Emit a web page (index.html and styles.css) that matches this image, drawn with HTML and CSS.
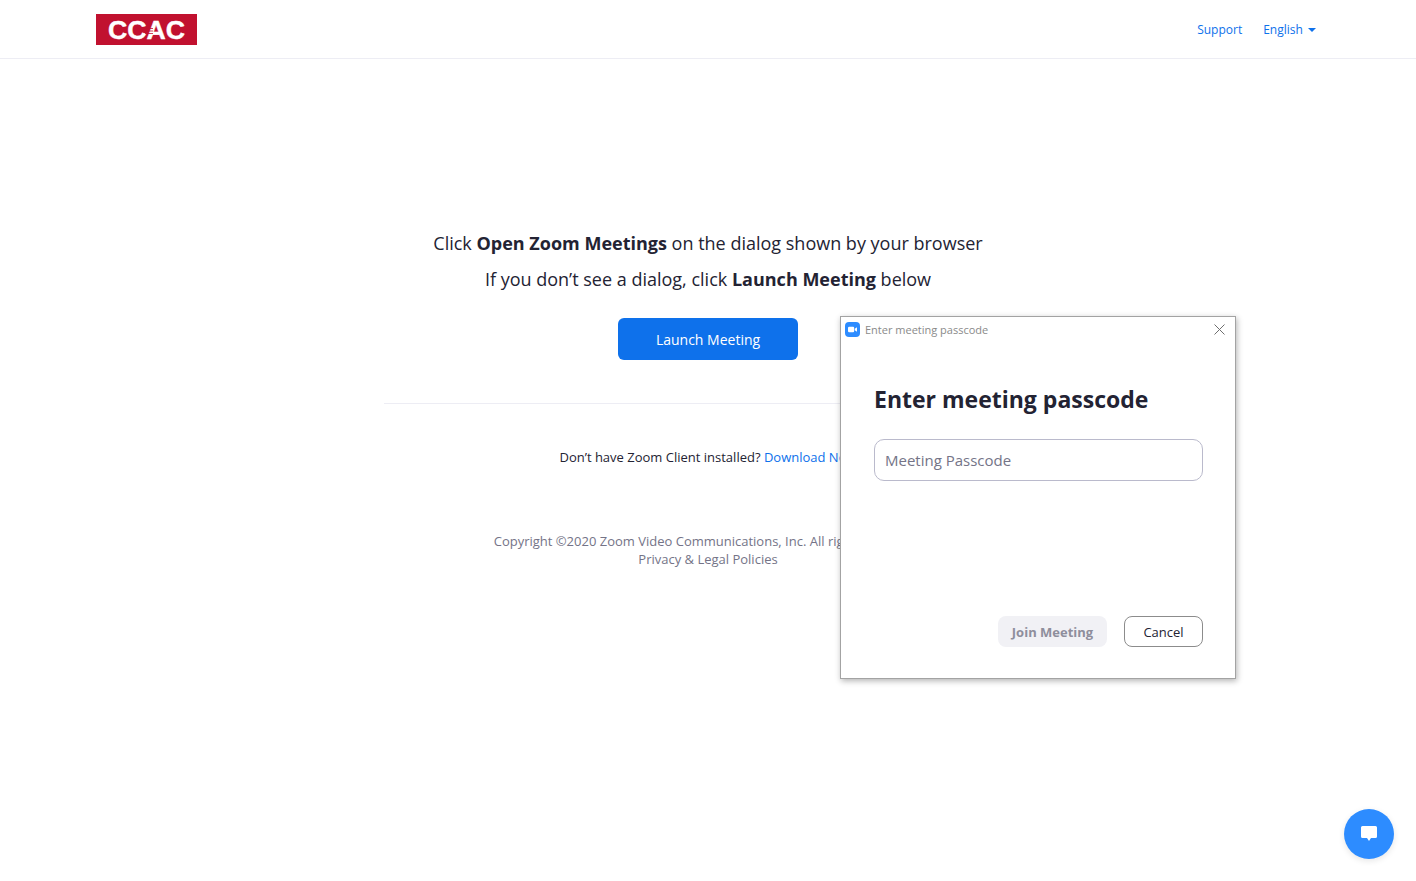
FILE: index.html
```html
<!DOCTYPE html>
<html lang="en">
<head>
    <meta charset="UTF-8">
    <meta name="viewport" content="width=device-width, initial-scale=1.0">
    <title>Launch Meeting</title>
    <link rel="stylesheet" href="styles.css">
</head>
<body>
    <header class="topbar">
        <a class="logo" href="#">
            <svg width="101" height="31" viewBox="0 0 101 31">
                <rect width="101" height="31" fill="#c1112f"/>
                <text x="12" y="24.5" class="logo-text" textLength="77" lengthAdjust="spacingAndGlyphs">CCAC</text>
                <path d="M49 14.5h8M49 17h8M49 19.5h8" stroke="#c1112f" stroke-width="0.8"/>
            </svg>
        </a>
        <nav class="topnav">
            <a href="#">Support</a>
            <a href="#">English <span class="caret"></span></a>
        </nav>
    </header>

    <main class="launch">
        <p class="lead">Click <b>Open Zoom Meetings</b> on the dialog shown by your browser</p>
        <p class="lead">If you don’t see a dialog, click <b>Launch Meeting</b> below</p>
        <a class="launch-btn" href="#">Launch Meeting</a>
        <hr class="divider">
        <p class="install">Don’t have Zoom Client installed? <a href="#">Download Now</a></p>
        <div class="copyright">
            <div>Copyright ©2020 Zoom Video Communications, Inc. All rights reserved.</div>
            <div>Privacy &amp; Legal Policies</div>
        </div>
    </main>

    <div class="dialog">
        <div class="dialog-title">
            <svg class="zoom-icon" width="15" height="15" viewBox="0 0 15 15">
                <rect width="15" height="15" rx="4" fill="#2d8cff"/>
                <rect x="3" y="4.8" width="6.2" height="5.4" rx="1.2" fill="#fff"/>
                <path d="M9.8 6.8l2.2-1.6v4.6L9.8 8.2z" fill="#fff"/>
            </svg>
            <span>Enter meeting passcode</span>
            <svg class="close-icon" width="11" height="11" viewBox="0 0 11 11">
                <path d="M.5.5l10 10M10.5.5l-10 10" stroke="#6e6e6e" stroke-width="1" fill="none"/>
            </svg>
        </div>
        <div class="dialog-body">
            <h2>Enter meeting passcode</h2>
            <input class="passcode" type="text" placeholder="Meeting Passcode">
            <div class="dialog-actions">
                <button class="join" disabled>Join Meeting</button>
                <button class="cancel">Cancel</button>
            </div>
        </div>
    </div>

    <button class="chat">
        <svg width="18" height="18" viewBox="0 0 18 18">
            <path d="M2.5 1h13A1.5 1.5 0 0 1 17 2.500v9a1.500 1.500 0 0 1-1.500 1.500H11l-2 3-2-3H2.500A1.500 1.500 0 0 1 1 11.500v-9A1.500 1.500 0 0 1 2.500 1z" fill="#fff"/>
        </svg>
    </button>
</body>
</html>
```

FILE: styles.css
```css
* {
    box-sizing: border-box;
}

body {
    margin: 0;
    height: 881px;
    overflow: hidden;
    background: #fff;
    font-family: "Open Sans", Arial, sans-serif;
    color: #232333;
}

a {
    color: #0e71eb;
    text-decoration: none;
}

.topbar {
    display: flex;
    justify-content: space-between;
    align-items: center;
    height: 59px;
    padding: 0 100px 0 96px;
    border-bottom: 1px solid #ededf4;
}

.logo {
    display: flex;
}

.logo-text {
    font-family: "Liberation Sans", Arial, sans-serif;
    font-size: 25px;
    font-weight: 700;
    fill: #fff;
    stroke: #fff;
    stroke-width: 0.4px;
}

.topnav {
    display: flex;
    gap: 21px;
    font-size: 12px;
}

.caret {
    display: inline-block;
    width: 0;
    height: 0;
    margin-left: 2px;
    vertical-align: middle;
    border-top: 4px solid #0e71eb;
    border-left: 4px solid transparent;
    border-right: 4px solid transparent;
}

.launch {
    display: flex;
    flex-direction: column;
    align-items: center;
    padding-top: 166px;
    text-align: center;
}

.lead {
    margin: 0;
    font-size: 18px;
    line-height: 36px;
}

.launch-btn {
    display: flex;
    justify-content: center;
    align-items: center;
    width: 180px;
    height: 42px;
    margin-top: 21px;
    background: #0e71eb;
    border-radius: 6px;
    color: #fff;
    font-size: 14px;
}

.divider {
    width: 648px;
    margin: 43px 0 0;
    border: 0;
    border-top: 1px solid #ededf4;
}

.install {
    margin: 44px 0 0;
    font-size: 13px;
    line-height: 18px;
}

.copyright {
    margin-top: 66px;
    font-size: 13px;
    line-height: 18px;
    color: #747487;
}

.dialog {
    position: absolute;
    left: 840px;
    top: 316px;
    width: 396px;
    height: 363px;
    background: #fff;
    border: 1px solid #a3a3a3;
    box-shadow: 1px 2px 6px rgba(0, 0, 0, 0.3);
}

.dialog-title {
    display: flex;
    align-items: center;
    gap: 5px;
    height: 24px;
    padding: 0 10px 0 4px;
    font-size: 11px;
    color: #8a8a8a;
}

.close-icon {
    margin-left: auto;
}

.dialog-body {
    padding: 41px 32px 0 33px;
}

.dialog-body h2 {
    margin: 0;
    font-size: 23px;
    line-height: 34px;
    font-weight: 700;
    color: #232333;
}

.passcode {
    display: block;
    width: 329px;
    height: 42px;
    margin-top: 23px;
    padding: 0 10px;
    border: 1px solid #babacc;
    border-radius: 10px;
    font-family: inherit;
    font-size: 15px;
    outline: none;
}

.passcode::placeholder {
    color: #747487;
    opacity: 1;
}

.dialog-actions {
    display: flex;
    justify-content: flex-end;
    gap: 17px;
    margin-top: 135px;
}

.dialog-actions button {
    height: 31px;
    font-family: inherit;
    font-size: 13px;
    padding: 0;
}

.join {
    width: 109px;
    border: 0;
    border-radius: 8px;
    background: #f1f1f5;
    color: #8e8e9c;
    font-weight: 700;
}

.cancel {
    width: 79px;
    border: 1px solid #8c8c8c;
    border-radius: 8px;
    background: #fff;
    color: #232333;
}

.chat {
    position: fixed;
    left: 1344px;
    top: 809px;
    display: flex;
    justify-content: center;
    align-items: center;
    width: 50px;
    height: 50px;
    padding: 0;
    border: 0;
    border-radius: 50%;
    background: #2d8cff;
    box-shadow: 0 2px 6px rgba(0, 0, 0, 0.1);
}
```
